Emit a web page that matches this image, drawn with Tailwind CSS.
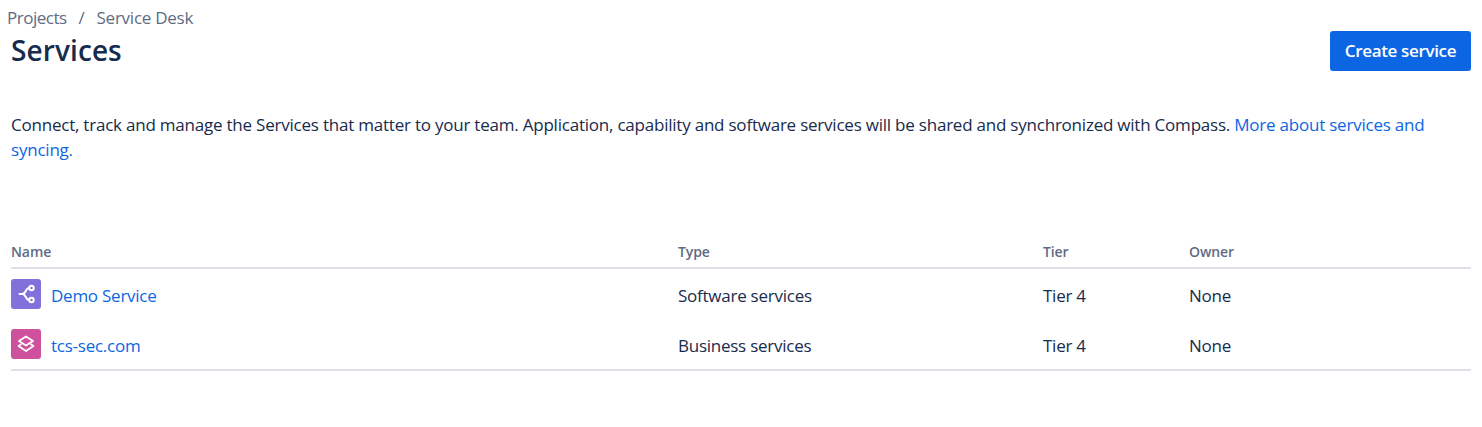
<!DOCTYPE html>
<html><head><meta charset="utf-8"><title>Services</title>
<script src="https://cdn.jsdelivr.net/npm/@tailwindcss/browser@4"></script></head>
<body class="bg-white font-['Open_Sans','Noto_Sans',sans-serif] text-[#172b4d] h-[427px] overflow-hidden">
<div class="pr-[11px]">
  <nav class="flex items-center h-[24px] mt-[6px] pl-[7px] text-[17px] text-[#5e6c84] tracking-[-0.25px]">
    <span class="tracking-[-0.5px]">Projects</span><span class="mx-[12px]">/</span><span>Service Desk</span>
  </nav>
  <div class="flex justify-between items-start pl-[11px]">
    <h1 class="text-[28px] leading-[40px] font-semibold tracking-[0.1px] text-[#172b4d]">Services</h1>
    <button class="w-[141px] h-[40px] mt-[1px] bg-[#0c66e4] text-white rounded-[3px] text-[17px] font-semibold tracking-[-0.35px]">Create service</button>
  </div>
  <p class="pl-[11px] mt-[41px] text-[17px] leading-[25px] text-[#172b4d] tracking-[-0.22px]">Connect, track and manage the Services that matter to your team. Application, capability and software services will be shared and synchronized with Compass. <a class="text-[#0c66e4]">More about services and syncing.</a></p>
  <div class="ml-[11px] mt-[75px] w-[1460px] text-[17px] leading-[34px] tracking-[-0.25px]">
    <div class="grid grid-cols-[667px_365px_146px_1fr] h-[32px] items-center border-b-2 border-[#dfe1e6] text-[14px] leading-[20px] font-semibold text-[#5e6c84] tracking-[-0.1px]">
      <div>Name</div><div>Type</div><div>Tier</div><div>Owner</div>
    </div>
    <div class="grid grid-cols-[667px_365px_146px_1fr] h-[49px] items-start pt-[10px]">
      <div class="flex items-start gap-[10px]">
        <span class="w-[30px] h-[30px] rounded-[3px] bg-[#8270db]">
          <svg width="30" height="30" viewBox="0 0 30 30" fill="none" stroke="#fff" stroke-width="2" stroke-linecap="round"><circle cx="20.500" cy="9" r="2.200"/><circle cx="20.500" cy="21" r="2.200"/><path d="M8.500 15H11c2 0 2.800-1 3.800-3s1.700-3 3.400-3M11 15c2 0 2.800 1 3.800 3s1.700 3 3.400 3"/></svg>
        </span>
        <a class="text-[#0c66e4]">Demo Service</a>
      </div>
      <div>Software services</div><div>Tier 4</div><div>None</div>
    </div>
    <div class="grid grid-cols-[667px_365px_146px_1fr] h-[51px] items-start pt-[11px]">
      <div class="flex items-start gap-[10px]">
        <span class="w-[30px] h-[30px] rounded-[3px] bg-[#cd519d]">
          <svg width="30" height="30" viewBox="0 0 30 30" fill="none" stroke="#fff" stroke-width="1.800" stroke-linejoin="round"><path d="M15 7.500 22 12 15 16.500 8 12z"/><path d="M10.500 15 7.500 17 15 22 22.500 17 19.500 15"/></svg>
        </span>
        <a class="text-[#0c66e4]">tcs-sec.com</a>
      </div>
      <div>Business services</div><div>Tier 4</div><div>None</div>
    </div>
    <div class="border-t-2 border-[#dfe1e6]"></div>
  </div>
</div>
</body></html>
